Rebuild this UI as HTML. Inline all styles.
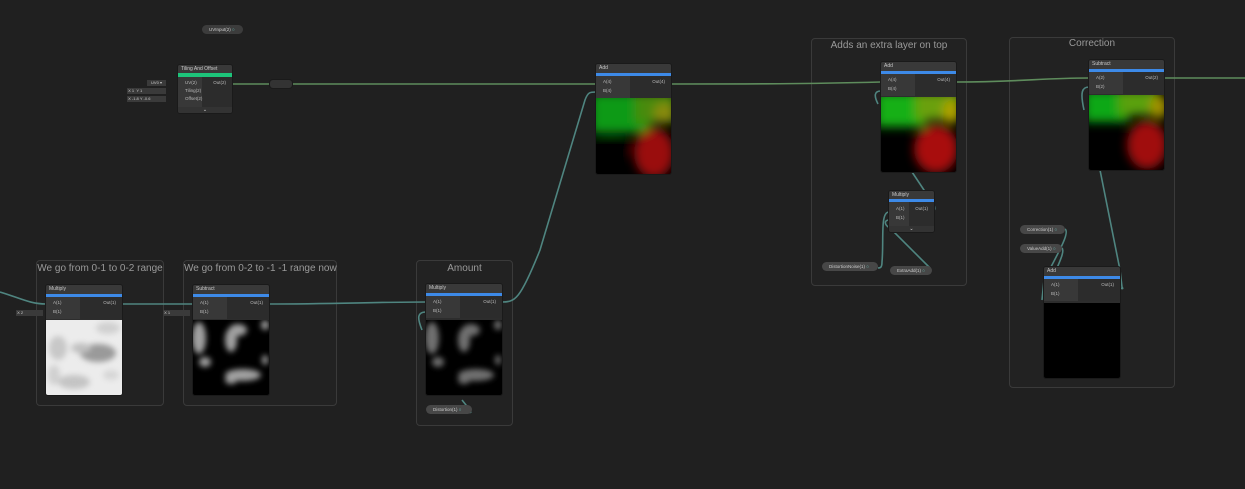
<!DOCTYPE html>
<html><head><meta charset="utf-8"><style>
*{margin:0;padding:0;box-sizing:border-box}
body{width:1245px;height:489px;background:#202020;position:relative;overflow:hidden;font-family:"Liberation Sans",sans-serif}
.g{position:absolute;border:1px solid #3a3a3a;border-radius:4px;background:#222222}
.g .t{text-align:center;color:#9a9a9a;font-size:10px;margin-top:2px;white-space:nowrap}
.n{position:absolute;background:#2d2d2d;border-radius:2px;overflow:hidden;box-shadow:0 0 0 1px #1a1a1a}
.n .h{height:9px;background:#393939;color:#c8c8c8;font-size:5px;line-height:9px;padding-left:3px}
.n .b{height:3px;background:#3d8ae8}
.n .p{position:relative;height:22px;background:#2c2c2c}
.n .p .l{position:absolute;left:0;top:0;bottom:0;width:45%;background:#383838}
.n .p span{position:absolute;font-size:4.5px;color:#bbb}
.n .pv{position:absolute;left:0;right:0;bottom:0}
.pill{position:absolute;height:9px;border-radius:5px;background:#474747;color:#ccc;font-size:4.5px;line-height:9px;padding-left:7px}
svg.w{position:absolute;left:0;top:0}
</style></head><body>

<div class="g" style="left:36px;top:260px;width:128px;height:146px"><div class="t">We go from 0-1 to 0-2 range</div></div>
<div class="g" style="left:183px;top:260px;width:154px;height:146px"><div class="t">We go from 0-2 to -1 -1 range now</div></div>
<div class="g" style="left:416px;top:260px;width:97px;height:166px"><div class="t">Amount</div></div>
<div class="g" style="left:811px;top:38px;width:156px;height:248px"><div class="t" style="margin-top:1px">Adds an extra layer on top</div></div>
<div class="g" style="left:1009px;top:37px;width:166px;height:351px"><div class="t" style="margin-top:0">Correction</div></div>

<svg class="w" width="1245" height="489">
<defs>
<filter id="bl"><feGaussianBlur stdDeviation="3"/></filter>
<filter id="bl2"><feGaussianBlur stdDeviation="5"/></filter>
</defs>
<g fill="none" stroke-width="1.6">
<path d="M232 84 L270 84 M292 84 C420 84 480 84 596 84 L671 84 C760 84 800 84 881 82 L956 82 C1020 82 1040 78 1089 78 L1164 78 L1245 78" stroke="#5e8c5c"/>
<path d="M0 292 C20 298 30 304 46 304 L122 304 C150 304 170 304 193 304 L269 304 C330 304 380 302 426 302 M502 302 C515 302 520 300 540 250 L585 100 C588 92 590 92 596 92" stroke="#4f8580"/>
<path d="M426 312 C416 312 418 320 422 330 M462 400 L470 410 C472 414 470 412 466 412" stroke="#4f8580"/>
<path d="M881 91 C874 91 874 96 878 104 M912 172 L934 205 C936 210 934 212 929 212 M889 212 C880 212 884 240 882 262 C882 268 880 268 878 268 M889 220 C884 220 884 225 890 228 L930 268" stroke="#4f8580"/>
<path d="M1089 87 C1082 87 1080 92 1084 110 M1100 170 L1120 270 L1122 287 C1124 290 1121 288 1120 288 M1065 229 C1070 232 1060 250 1044 280 L1042 300 M1062 248 C1066 252 1055 270 1048 290" stroke="#4f8580"/>
</g>
</svg>

<div class="pill" style="left:202px;top:25px;width:41px;background:#3c3c3c">UVInput(2) <span style="color:#6bc0b8">○</span></div>

<div style="position:absolute;left:147px;top:80px;width:19px;height:6px;background:#3a3a3a;font-size:4px;color:#ccc;text-align:center;line-height:6px">UV0 ▾</div>
<div style="position:absolute;left:127px;top:88px;width:39px;height:6px;background:#3a3a3a;font-size:4px;color:#ccc;line-height:6px">&nbsp;X 1 &nbsp;Y 1</div>
<div style="position:absolute;left:127px;top:96px;width:39px;height:6px;background:#3a3a3a;font-size:4px;color:#ccc;line-height:6px">&nbsp;X -1.8 Y -0.6</div>
<div class="n" style="left:178px;top:65px;width:54px;height:48px">
 <div class="h" style="height:8px;line-height:8px">Tiling And Offset</div><div class="b" style="background:#1dc47a;height:4px"></div>
 <div class="p" style="height:30px"><div class="l"></div><span style="left:7px;top:3px">UV(2)</span><span style="left:7px;top:11px">Tiling(2)</span><span style="left:7px;top:19px">Offset(2)</span><span style="right:6px;top:3px">Out(2)</span></div>
 <div style="height:6px;background:#333;color:#ddd;font-size:5px;text-align:center;line-height:6px">⌄</div>
</div>
<div class="n" style="left:270px;top:80px;width:22px;height:8px;background:#333;border-radius:3px"></div>

<div class="n" style="left:596px;top:64px;width:75px;height:110px">
 <div class="h">Add</div><div class="b"></div>
 <div class="p"><div class="l"></div><span style="left:7px;top:3px">A(4)</span><span style="left:7px;top:12px">B(4)</span><span style="right:6px;top:3px">Out(4)</span></div>
 <div class="pv" style="height:76px"><svg width="75" height="76"><rect width="75" height="76" fill="#000"/><g filter="url(#bl2)"><rect x="-5" y="-5" width="60" height="40" fill="#109a12"/><rect x="40" y="-5" width="40" height="30" fill="#4a8a10"/><ellipse cx="68" cy="15" rx="10" ry="10" fill="#8a8a08"/><ellipse cx="58" cy="55" rx="20" ry="25" fill="#9a0a0a"/><ellipse cx="15" cy="50" rx="20" ry="10" fill="#000"/></g></svg></div>
</div>

<div class="n" style="left:881px;top:62px;width:75px;height:110px">
 <div class="h">Add</div><div class="b"></div>
 <div class="p"><div class="l"></div><span style="left:7px;top:3px">A(4)</span><span style="left:7px;top:12px">B(4)</span><span style="right:6px;top:3px">Out(4)</span></div>
 <div class="pv" style="height:75px"><svg width="75" height="75"><rect width="75" height="75" fill="#000"/><g filter="url(#bl2)"><rect x="-5" y="-5" width="50" height="35" fill="#13b015"/><rect x="35" y="-5" width="45" height="28" fill="#6aa010"/><ellipse cx="70" cy="15" rx="8" ry="12" fill="#b0a000"/><ellipse cx="55" cy="52" rx="22" ry="24" fill="#a80808"/></g></svg></div>
</div>

<div class="n" style="left:889px;top:191px;width:45px;height:41px">
 <div class="h" style="height:8px;line-height:8px">Multiply</div><div class="b"></div>
 <div class="p" style="height:24px"><div class="l"></div><span style="left:7px;top:4px">A(1)</span><span style="left:7px;top:13px">B(1)</span><span style="right:6px;top:4px">Out(1)</span></div>
 <div style="height:6px;background:#333;color:#ddd;font-size:5px;text-align:center;line-height:6px">⌄</div>
</div>
<div class="pill" style="left:822px;top:262px;width:56px">DistortionNoise(1) <span style="color:#6bc0b8">○</span></div>
<div class="pill" style="left:890px;top:266px;width:42px">ExtraAdd(1) <span style="color:#6bc0b8">○</span></div>

<div class="n" style="left:1089px;top:60px;width:75px;height:110px">
 <div class="h">Subtract</div><div class="b"></div>
 <div class="p"><div class="l"></div><span style="left:7px;top:3px">A(2)</span><span style="left:7px;top:12px">B(2)</span><span style="right:6px;top:3px">Out(2)</span></div>
 <div class="pv" style="height:75px"><svg width="75" height="75"><rect width="75" height="75" fill="#000"/><g filter="url(#bl2)"><rect x="-5" y="-5" width="45" height="32" fill="#10a812"/><rect x="30" y="-5" width="40" height="25" fill="#5aa010"/><ellipse cx="70" cy="12" rx="9" ry="12" fill="#a09000"/><ellipse cx="58" cy="50" rx="20" ry="24" fill="#a00808"/></g></svg></div>
</div>
<div class="pill" style="left:1020px;top:225px;width:45px">Correction(1) <span style="color:#6bc0b8">○</span></div>
<div class="pill" style="left:1020px;top:244px;width:42px">ValueAdd(1) <span style="color:#6bc0b8">○</span></div>
<div class="n" style="left:1044px;top:267px;width:76px;height:111px">
 <div class="h">Add</div><div class="b"></div>
 <div class="p"><div class="l"></div><span style="left:7px;top:3px">A(1)</span><span style="left:7px;top:12px">B(1)</span><span style="right:6px;top:3px">Out(1)</span></div>
 <div class="pv" style="height:75px;background:#000"></div>
</div>

<div style="position:absolute;left:16px;top:310px;width:27px;height:6px;background:#3a3a3a;font-size:4px;color:#ccc;line-height:6px">&nbsp;X 2</div>
<div class="n" style="left:46px;top:285px;width:76px;height:110px">
 <div class="h">Multiply</div><div class="b"></div>
 <div class="p"><div class="l"></div><span style="left:7px;top:3px">A(1)</span><span style="left:7px;top:12px">B(1)</span><span style="right:6px;top:3px">Out(1)</span></div>
 <div class="pv" style="height:75px"><svg width="76" height="75"><rect width="76" height="75" fill="#ececec"/><g filter="url(#bl)"><ellipse cx="52" cy="33" rx="18" ry="9" fill="#9a9a9a"/><ellipse cx="35" cy="28" rx="10" ry="5" fill="#c0c0c0"/><ellipse cx="12" cy="28" rx="9" ry="12" fill="#c8c8c8"/><ellipse cx="28" cy="62" rx="16" ry="7" fill="#c4c4c4"/><ellipse cx="62" cy="8" rx="12" ry="6" fill="#d0d0d0"/><ellipse cx="8" cy="55" rx="6" ry="10" fill="#d0d0d0"/><ellipse cx="65" cy="55" rx="8" ry="5" fill="#d6d6d6"/></g></svg></div>
</div>
<div style="position:absolute;left:163px;top:310px;width:27px;height:6px;background:#3a3a3a;font-size:4px;color:#ccc;line-height:6px">&nbsp;X 1</div>
<div class="n" style="left:193px;top:285px;width:76px;height:110px">
 <div class="h">Subtract</div><div class="b"></div>
 <div class="p"><div class="l"></div><span style="left:7px;top:3px">A(1)</span><span style="left:7px;top:12px">B(1)</span><span style="right:6px;top:3px">Out(1)</span></div>
 <div class="pv" style="height:75px"><svg width="76" height="75"><rect width="76" height="75" fill="#000"/><g filter="url(#bl)" fill="#a0a0a0"><ellipse cx="6" cy="18" rx="7" ry="16"/><ellipse cx="12" cy="42" rx="6" ry="5"/><ellipse cx="38" cy="20" rx="6" ry="12"/><ellipse cx="45" cy="10" rx="9" ry="6"/><ellipse cx="50" cy="55" rx="18" ry="6"/><ellipse cx="38" cy="60" rx="6" ry="4"/><ellipse cx="72" cy="5" rx="4" ry="5"/><ellipse cx="72" cy="40" rx="3" ry="5"/></g></svg></div>
</div>
<div class="n" style="left:426px;top:284px;width:76px;height:111px">
 <div class="h">Multiply</div><div class="b"></div>
 <div class="p"><div class="l"></div><span style="left:7px;top:3px">A(1)</span><span style="left:7px;top:12px">B(1)</span><span style="right:6px;top:3px">Out(1)</span></div>
 <div class="pv" style="height:75px"><svg width="76" height="75"><rect width="76" height="75" fill="#000"/><g filter="url(#bl)" fill="#707070"><ellipse cx="6" cy="18" rx="7" ry="16"/><ellipse cx="12" cy="42" rx="6" ry="5"/><ellipse cx="38" cy="20" rx="6" ry="12"/><ellipse cx="45" cy="10" rx="9" ry="6"/><ellipse cx="50" cy="55" rx="18" ry="6"/><ellipse cx="38" cy="60" rx="6" ry="4"/><ellipse cx="72" cy="5" rx="4" ry="5"/><ellipse cx="72" cy="40" rx="3" ry="5"/></g></svg></div>
</div>
<div class="pill" style="left:426px;top:405px;width:46px">Distortion(1) <span style="color:#6bc0b8">○</span></div>

</body></html>
